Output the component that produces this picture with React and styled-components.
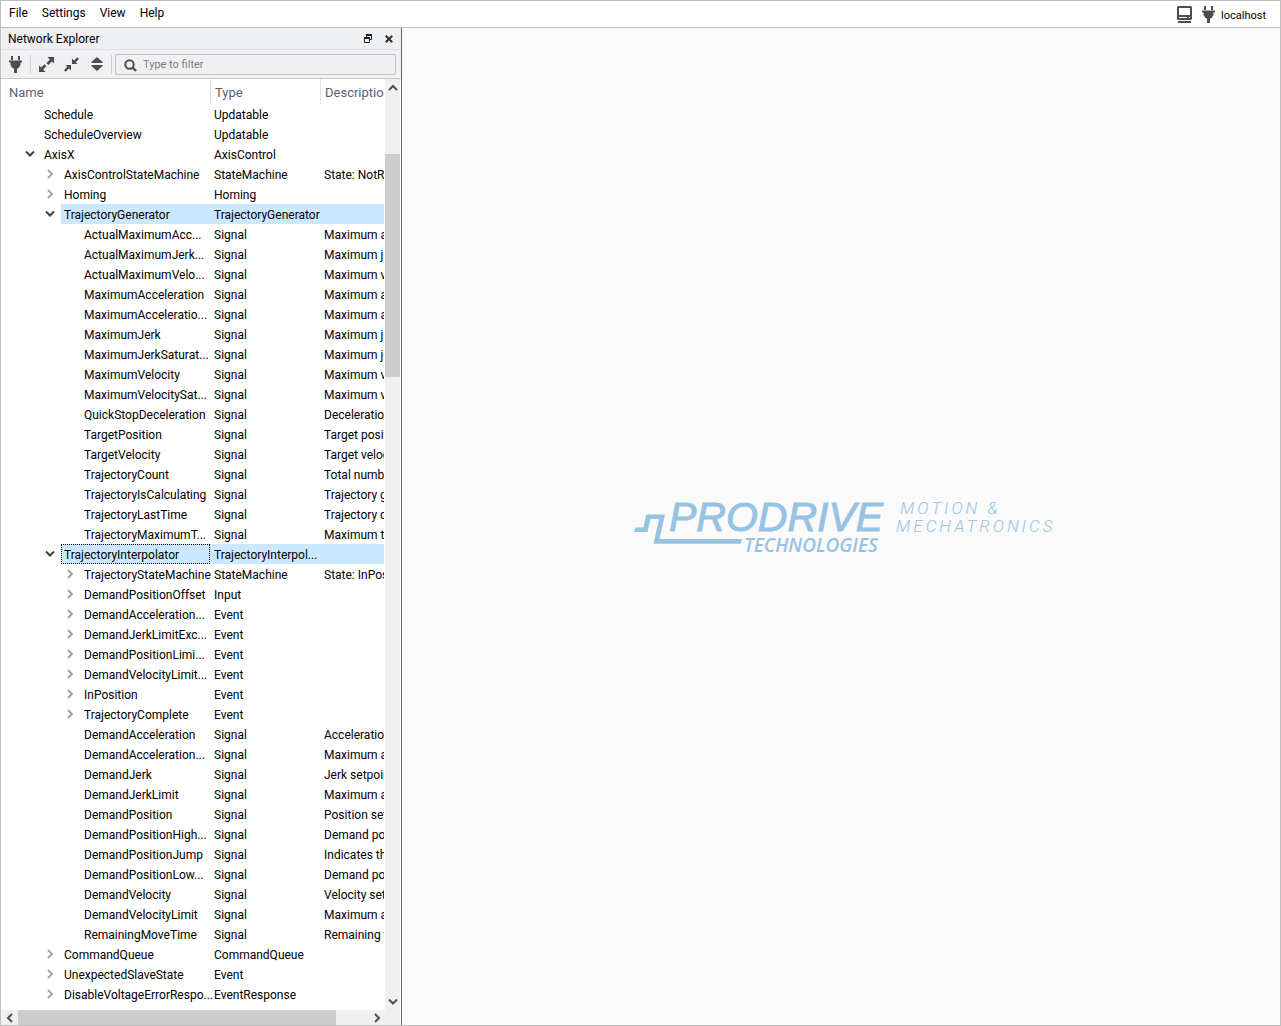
import React, { useState } from "react";
import styled, { createGlobalStyle, css } from "styled-components";

const color = {
  frame: "#bfbfbf",
  line: "#c6c6c8",
  softLine: "#e2e2e4",
  panel: "#eff0f2",
  workspace: "#fafafa",
  icon: "#4d4d4d",
  heading: "#55627e",
  selected: "#cce8ff",
  track: "#f0f0f0",
  thumb: "#cdcdcd",
  brand: "#97c3e2",
};

const GlobalStyle = createGlobalStyle`
  *, *::before, *::after { box-sizing: border-box; }
  body {
    margin: 0;
    background: #fff;
    color: #000;
    font: 12px/20px Roboto, "Liberation Sans", sans-serif;
  }
  button, input { font: inherit; color: inherit; margin: 0; padding: 0; }
`;

const Window = styled.div`
  display: flex;
  flex-direction: column;
  height: 100vh;
  border: 1px solid ${color.frame};
  overflow: hidden;
`;

const MenuBar = styled.header`
  display: flex;
  align-items: flex-start;
  justify-content: space-between;
  flex: none;
  height: 27px;
  padding-right: 14px;
  border-bottom: 1px solid ${color.frame};
`;

const Menus = styled.nav`
  display: flex;
  padding-left: 1px;
`;

const MenuButton = styled.button`
  padding: 0 7px;
  border: 0;
  background: none;
  line-height: 24px;
`;

const Status = styled.div`
  display: flex;
  align-items: center;
  height: 26px;
  font-size: 11px;
  color: ${color.icon};
`;

const Host = styled.span`
  padding: 4px 0 0 6px;
  color: #000;
`;

const StatusIcon = styled.span`
  display: flex;
  padding-left: 10px;
`;

const Body = styled.div`
  display: flex;
  flex: 1;
  min-height: 0;
`;

const Dock = styled.aside`
  display: flex;
  flex-direction: column;
  flex: none;
  width: 401px;
  border-right: 1px solid #646464;
`;

const DockTitle = styled.div`
  display: flex;
  align-items: center;
  flex: none;
  height: 22px;
  padding: 0 4px 0 7px;
  background: ${color.panel};
  border-bottom: 1px solid ${color.softLine};
`;

const Title = styled.h1`
  flex: 1;
  margin: 0;
  font-size: 12px;
  font-weight: 400;
`;

const IconButton = styled.button`
  display: flex;
  align-items: center;
  justify-content: center;
  flex: none;
  width: ${(p) => p.$width || 25}px;
  height: 22px;
  border: 0;
  background: none;
  color: ${(p) => p.$color || color.icon};
`;

const Toolbar = styled.div`
  display: flex;
  align-items: center;
  flex: none;
  height: 29px;
  padding: 0 5px 0 2px;
  background: ${color.panel};
  border-bottom: 1px solid ${color.line};
`;

const Separator = styled.span`
  flex: none;
  width: 1px;
  height: 19px;
  margin: 0 3px 0 2px;
  background: #cfcfd1;
`;

const Filter = styled.label`
  display: flex;
  align-items: center;
  flex: 1;
  gap: 6px;
  min-width: 0;
  height: 21px;
  padding: 2px 0 0 8px;
  border: 1px solid #c4c4c6;
  border-radius: 2px;
  color: ${color.icon};
`;

const FilterInput = styled.input`
  flex: 1;
  min-width: 0;
  border: 0;
  outline: 0;
  background: none;
  font-size: 11px;
  &::placeholder { color: #7d7d7d; opacity: 1; }
`;

const Scroller = styled.div`
  display: grid;
  grid-template-columns: minmax(0, 1fr) 15px;
  grid-template-rows: minmax(0, 1fr) 15px;
  flex: 1;
  min-height: 0;
  padding-right: 1px;
`;

const Viewport = styled.div`
  margin-right: 1px;
  overflow: hidden;
`;

const Tree = styled.table`
  width: 100%;
  table-layout: fixed;
  border-collapse: collapse;
`;

const Col = styled.col`
  width: ${(p) => (p.$width ? `${p.$width}px` : "auto")};
`;

const HeadCell = styled.th`
  height: 25px;
  padding: 0;
  color: ${color.heading};
  font-size: 13px;
  font-weight: 400;
  line-height: 27px;
  text-align: left;
  white-space: nowrap;
  overflow: hidden;
`;

const HeadLabel = styled.span`
  display: block;
  height: 25px;
  padding-left: ${(p) => (p.$first ? 8 : 4)}px;
  border-left: ${(p) => (p.$first ? "0" : `1px solid ${color.softLine}`)};
  overflow: hidden;
`;

const Cell = styled.td`
  height: 20px;
  padding: 2px 0 0 4px;
  background: ${(p) => (p.$selected ? color.selected : "transparent")};
  line-height: 18px;
  white-space: nowrap;
  overflow: hidden;
`;

const NameCell = styled.td`
  height: 20px;
  padding: 0;
`;

const NameLine = styled.div`
  display: flex;
  padding-left: ${(p) => p.$depth * 20}px;
`;

const Expander = styled.button`
  display: flex;
  align-items: center;
  flex: none;
  width: 20px;
  height: 20px;
  padding-left: 4px;
  border: 0;
  background: none;
  color: ${(p) => (p.$open ? "#404040" : "#a2a2a2")};
`;

const Gutter = styled.span`
  flex: none;
  width: 20px;
`;

const Name = styled.span`
  flex: 1;
  min-width: 0;
  padding: 2px 0 0 3px;
  line-height: 18px;
  white-space: nowrap;
  background: ${(p) => (p.$selected ? color.selected : "transparent")};
  ${(p) => p.$focused && css`
    outline: 1px dotted #000;
    outline-offset: -1px;
  `}
`;

const ScrollBar = styled.div`
  display: flex;
  flex-direction: ${(p) => (p.$vertical ? "column" : "row")};
  background: ${color.track};
`;

const ScrollButton = styled.button`
  display: flex;
  align-items: center;
  justify-content: center;
  flex: none;
  width: ${(p) => (p.$vertical ? 15 : 17)}px;
  height: ${(p) => (p.$vertical ? 17 : 15)}px;
  border: 0;
  background: none;
  color: #505050;
`;

const ScrollTrack = styled.div`
  display: flex;
  flex-direction: inherit;
  flex: 1;
`;

const ScrollSpace = styled.span`
  flex: ${(p) => p.$share} 0 0;
`;

const ScrollThumb = styled.span`
  flex: ${(p) => p.$share} 0 0;
  background: ${color.thumb};
`;

const Corner = styled.div`
  background: ${color.track};
`;

const Workspace = styled.main`
  display: flex;
  align-items: center;
  justify-content: center;
  flex: 1;
  min-width: 0;
  padding-left: 4px;
  background: ${color.workspace};
`;

const LogoArt = styled.svg`
  flex: none;
  fill: ${color.brand};
`;

const Wordmark = styled.text`
  font: italic 400 41px "Liberation Sans", sans-serif;
  stroke: ${color.brand};
  stroke-width: 1px;
`;

const SubMark = styled.text`
  font: italic 600 19px "Open Sans", sans-serif;
`;

const Division = styled.text`
  font: italic 300 17px Roboto, sans-serif;
  letter-spacing: 3px;
`;

function PlugIcon() {
  return (
    <svg width="13" height="17" viewBox="0 0 13 17" fill="currentColor" aria-hidden="true">
      <path d="M2 0h2v4H2zM9 0h2v4H9zM0 4.500h13v2H0zM1.500 6.500h10v2.500l-1.500 2.500-2 1.200v4.300h-3v-4.300l-2-1.200-1.500-2.500z" />
    </svg>
  );
}

function MonitorIcon() {
  return (
    <svg width="15" height="17" viewBox="0 0 15 17" fill="currentColor" aria-hidden="true">
      <path fillRule="evenodd" d="M1 0h13l1 1v12l-1 1H1l-1-1V1zM2 2v7h11V2zM2 11v1h8v-1zM12 11v1h1v-1z" />
      <path d="M1 15h13v2H1z" />
    </svg>
  );
}

function ExpandIcon() {
  return (
    <svg width="15" height="15" viewBox="0 0 16 16" fill="currentColor" aria-hidden="true">
      <path d="M9 0h7v7l-2.300-2.300-3.700 3.700-2.100-2.100 3.700-3.700zM0 9l2.300 2.300 3.500-3.500 2.100 2.100-3.500 3.500L7 16H0z" />
    </svg>
  );
}

function CollapseIcon() {
  return (
    <svg width="15" height="15" viewBox="0 0 16 16" fill="currentColor" aria-hidden="true">
      <path d="M8.500 1.500v6h6l-2-2L16 2l-1.700-1.700-3.700 3.500zM7.500 14.500v-6h-6l2 2L0 14l1.700 1.700 3.700-3.500z" />
    </svg>
  );
}

function SortIcon() {
  return (
    <svg width="12" height="16" viewBox="0 0 12 16" fill="currentColor" aria-hidden="true">
      <path d="M6 1l5.500 5v1H.5V6zM6 15l5.500-5V9H.5v1z" />
    </svg>
  );
}

function SearchIcon() {
  return (
    <svg width="13" height="13" viewBox="0 0 13 13" fill="none" stroke="currentColor" aria-hidden="true">
      <circle cx="5.500" cy="5.500" r="4.200" strokeWidth="2" />
      <path d="M8.500 8.500l3.500 3.500" strokeWidth="2.400" />
    </svg>
  );
}

function RestoreIcon() {
  return (
    <svg width="8" height="9" viewBox="0 0 8 9" fill="none" stroke="currentColor" aria-hidden="true">
      <path d="M2.500 3V.5h5v5H6M.5 3.500h5v5h-5z" />
      <path d="M2 1h6M0 4h6" strokeWidth="2" />
    </svg>
  );
}

function CloseIcon() {
  return (
    <svg width="8" height="8" viewBox="0 0 8 8" stroke="currentColor" strokeWidth="2" aria-hidden="true">
      <path d="M.7.7l6.600 6.600M7.300.7L.7 7.300" />
    </svg>
  );
}

const chevronPaths = {
  up: "M1 7l4-4 4 4",
  down: "M1 2.500l4 4 4-4",
  left: "M7 1L3 5l4 4",
  right: "M3 1l4 4-4 4",
};

function Chevron({ dir }) {
  return (
    <svg width="10" height="10" viewBox="0 0 10 10" fill="none" stroke="currentColor" strokeWidth="2" aria-hidden="true">
      <path d={chevronPaths[dir]} />
    </svg>
  );
}

function Logo() {
  return (
    <LogoArt width="420" height="56" viewBox="0 0 420 56" role="img" aria-label="Prodrive Technologies, Motion and Mechatronics">
      <path d="M1 33l1.300-4.500h8.200L13.300 15.500H32L26.500 40H109l-1.300 4.800H20.500L26 20h-8.700L14.500 33z" />
      <Wordmark x="36" y="32">PRODRIVE</Wordmark>
      <SubMark x="111" y="53">TECHNOLOGIES</SubMark>
      <Division x="267" y="15">MOTION &amp;</Division>
      <Division x="263" y="33">MECHATRONICS</Division>
    </LogoArt>
  );
}

// [depth, state, name, type, description, mark]; state: "open", "closed" or "" for a leaf
const nodes = [
  [1, "", "Schedule", "Updatable", ""],
  [1, "", "ScheduleOverview", "Updatable", ""],
  [1, "open", "AxisX", "AxisControl", ""],
  [2, "closed", "AxisControlStateMachine", "StateMachine", "State: NotReady"],
  [2, "closed", "Homing", "Homing", ""],
  [2, "open", "TrajectoryGenerator", "TrajectoryGenerator", "", "selected"],
  [3, "", "ActualMaximumAcc...", "Signal", "Maximum acceleration"],
  [3, "", "ActualMaximumJerk...", "Signal", "Maximum jerk"],
  [3, "", "ActualMaximumVelo...", "Signal", "Maximum velocity"],
  [3, "", "MaximumAcceleration", "Signal", "Maximum acceleration"],
  [3, "", "MaximumAcceleratio...", "Signal", "Maximum acceleration"],
  [3, "", "MaximumJerk", "Signal", "Maximum jerk"],
  [3, "", "MaximumJerkSaturat...", "Signal", "Maximum jerk"],
  [3, "", "MaximumVelocity", "Signal", "Maximum velocity"],
  [3, "", "MaximumVelocitySat...", "Signal", "Maximum velocity"],
  [3, "", "QuickStopDeceleration", "Signal", "Deceleration"],
  [3, "", "TargetPosition", "Signal", "Target position"],
  [3, "", "TargetVelocity", "Signal", "Target velocity"],
  [3, "", "TrajectoryCount", "Signal", "Total number"],
  [3, "", "TrajectoryIsCalculating", "Signal", "Trajectory generator"],
  [3, "", "TrajectoryLastTime", "Signal", "Trajectory calculation"],
  [3, "", "TrajectoryMaximumT...", "Signal", "Maximum time"],
  [2, "open", "TrajectoryInterpolator", "TrajectoryInterpol...", "", "focused"],
  [3, "closed", "TrajectoryStateMachine", "StateMachine", "State: InPosition"],
  [3, "closed", "DemandPositionOffset", "Input", ""],
  [3, "closed", "DemandAcceleration...", "Event", ""],
  [3, "closed", "DemandJerkLimitExc...", "Event", ""],
  [3, "closed", "DemandPositionLimi...", "Event", ""],
  [3, "closed", "DemandVelocityLimit...", "Event", ""],
  [3, "closed", "InPosition", "Event", ""],
  [3, "closed", "TrajectoryComplete", "Event", ""],
  [3, "", "DemandAcceleration", "Signal", "Acceleration"],
  [3, "", "DemandAcceleration...", "Signal", "Maximum acceleration"],
  [3, "", "DemandJerk", "Signal", "Jerk setpoint"],
  [3, "", "DemandJerkLimit", "Signal", "Maximum allowed"],
  [3, "", "DemandPosition", "Signal", "Position setpoint"],
  [3, "", "DemandPositionHigh...", "Signal", "Demand position"],
  [3, "", "DemandPositionJump", "Signal", "Indicates that"],
  [3, "", "DemandPositionLow...", "Signal", "Demand position"],
  [3, "", "DemandVelocity", "Signal", "Velocity setpoint"],
  [3, "", "DemandVelocityLimit", "Signal", "Maximum allowed"],
  [3, "", "RemainingMoveTime", "Signal", "Remaining time"],
  [2, "closed", "CommandQueue", "CommandQueue", ""],
  [2, "closed", "UnexpectedSlaveState", "Event", ""],
  [2, "closed", "DisableVoltageErrorRespo...", "EventResponse", ""],
];

function TreeRow({ node }) {
  const [depth, state, name, type, description, mark] = node;
  const open = state === "open";
  const selected = Boolean(mark);
  return (
    <tr aria-selected={selected}>
      <NameCell>
        <NameLine $depth={depth}>
          {state ? (
            <Expander $open={open} aria-expanded={open} aria-label={name}>
              <Chevron dir={open ? "down" : "right"} />
            </Expander>
          ) : (
            <Gutter />
          )}
          <Name $selected={selected} $focused={mark === "focused"}>{name}</Name>
        </NameLine>
      </NameCell>
      <Cell $selected={selected}>{type}</Cell>
      <Cell $selected={selected}>{description}</Cell>
    </tr>
  );
}

function Scroll({ vertical, before, thumb, after }) {
  return (
    <ScrollBar $vertical={vertical}>
      <ScrollButton $vertical={vertical} aria-label={vertical ? "Scroll up" : "Scroll left"}>
        <Chevron dir={vertical ? "up" : "left"} />
      </ScrollButton>
      <ScrollTrack>
        <ScrollSpace $share={before} />
        <ScrollThumb $share={thumb} />
        <ScrollSpace $share={after} />
      </ScrollTrack>
      <ScrollButton $vertical={vertical} aria-label={vertical ? "Scroll down" : "Scroll right"}>
        <Chevron dir={vertical ? "down" : "right"} />
      </ScrollButton>
    </ScrollBar>
  );
}

export default function App() {
  const [filter, setFilter] = useState("");
  return (
    <>
      <GlobalStyle />
      <Window>
        <MenuBar>
          <Menus>
            {["File", "Settings", "View", "Help"].map((m) => (
              <MenuButton key={m}>{m}</MenuButton>
            ))}
          </Menus>
          <Status>
            <StatusIcon><MonitorIcon /></StatusIcon>
            <StatusIcon><PlugIcon /></StatusIcon>
            <Host>localhost</Host>
          </Status>
        </MenuBar>
        <Body>
          <Dock>
            <DockTitle>
              <Title>Network Explorer</Title>
              <IconButton $width={26} $color="#202020" aria-label="Float panel"><RestoreIcon /></IconButton>
              <IconButton $width={16} $color="#303030" aria-label="Close panel"><CloseIcon /></IconButton>
            </DockTitle>
            <Toolbar>
              <IconButton aria-label="Connect"><PlugIcon /></IconButton>
              <Separator />
              <IconButton aria-label="Expand all"><ExpandIcon /></IconButton>
              <IconButton aria-label="Collapse all"><CollapseIcon /></IconButton>
              <IconButton aria-label="Sort"><SortIcon /></IconButton>
              <Separator />
              <Filter>
                <SearchIcon />
                <FilterInput
                  aria-label="Type to filter"
                  placeholder="Type to filter"
                  value={filter}
                  onChange={(e) => setFilter(e.target.value)}
                />
              </Filter>
            </Toolbar>
            <Scroller>
              <Viewport>
                <Tree>
                  <colgroup>
                    <Col $width={209} />
                    <Col $width={110} />
                    <Col />
                  </colgroup>
                  <thead>
                    <tr>
                      <HeadCell scope="col"><HeadLabel $first>Name</HeadLabel></HeadCell>
                      <HeadCell scope="col"><HeadLabel>Type</HeadLabel></HeadCell>
                      <HeadCell scope="col"><HeadLabel>Description</HeadLabel></HeadCell>
                    </tr>
                  </thead>
                  <tbody>
                    {nodes.map((node, i) => <TreeRow key={i} node={node} />)}
                  </tbody>
                </Tree>
              </Viewport>
              <Scroll vertical before={58} thumb={223} after={616} />
              <Scroll before={0} thumb={318} after={32} />
              <Corner />
            </Scroller>
          </Dock>
          <Workspace>
            <Logo />
          </Workspace>
        </Body>
      </Window>
    </>
  );
}
